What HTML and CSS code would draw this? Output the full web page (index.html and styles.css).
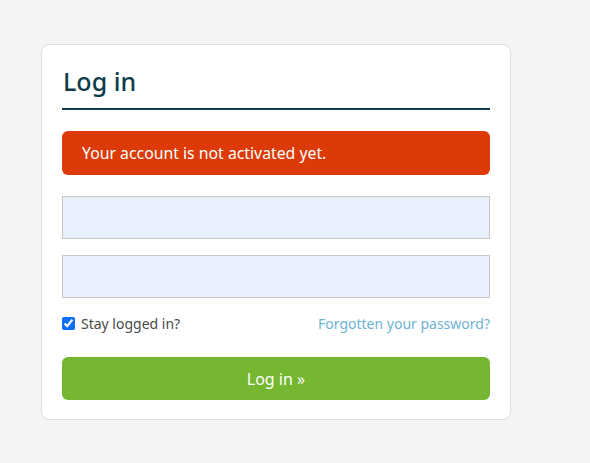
FILE: index.html
```html
<!DOCTYPE html>
<html>
<head>
<meta charset="utf-8">
<link rel="stylesheet" href="styles.css">
</head>
<body>
<div class="card">
  <h1 class="title">Log in</h1>
  <div class="alert">Your account is not activated yet.</div>
  <form class="form">
    <input class="field" type="text">
    <input class="field last" type="password">
    <div class="row">
      <label class="remember"><input type="checkbox" checked class="check"> Stay logged in?</label>
      <a class="forgot" href="#">Forgotten your password?</a>
    </div>
    <button class="btn" type="button">Log in »</button>
  </form>
</div>
</body>
</html>
```
FILE: styles.css
```css
html, body { margin: 0; padding: 0; }
body {
  background: #f4f4f4;
  font-family: "Noto Sans", sans-serif;
  padding: 44px 0 0 41px;
}
.card {
  box-sizing: border-box;
  width: 470px;
  background: #fff;
  border: 1px solid #dedede;
  border-radius: 8px;
  padding: 20px 20px 19px 20px;
}
.title {
  margin: 0;
  font-family: "Noto Sans", sans-serif;
  font-weight: 500;
  font-size: 25px;
  line-height: 32px;
  color: #0d3c4a;
  padding-bottom: 11px;
  border-bottom: 2px solid #0d3c4a;
  padding-left: 1px;
}
.alert {
  margin-top: 21px;
  background: #dc3a06;
  color: #fff;
  border-radius: 6px;
  height: 44px;
  display: flex;
  align-items: center;
  padding: 0 20px;
  font-size: 15.8px;
}
.form { display: flex; flex-direction: column; margin-top: 21px; }
.field {
  box-sizing: border-box;
  height: 43px;
  width: 100%;
  margin: 0 0 16px 0;
  background: #e8f0fe;
  border: 1px solid #c8c8c8;
  padding: 0 10px;
}
.field.last { margin-bottom: 14px; }
.row {
  display: flex;
  justify-content: space-between;
  align-items: center;
  height: 22px;
}
.remember {
  display: flex;
  align-items: center;
  font-size: 14px;
  color: #4a4a4a;
  gap: 6px;
}
.check { margin: 0; width: 13px; height: 13px; accent-color: #0b6ff0; }
.forgot {
  font-size: 14px;
  color: #6cb3d3;
  text-decoration: none;
}
.btn {
  margin-top: 23px;
  height: 43px;
  border: 0;
  border-radius: 6px;
  background: #76b731;
  color: #fff;
  font-family: "Noto Sans", sans-serif;
  font-size: 16px;
}
```
